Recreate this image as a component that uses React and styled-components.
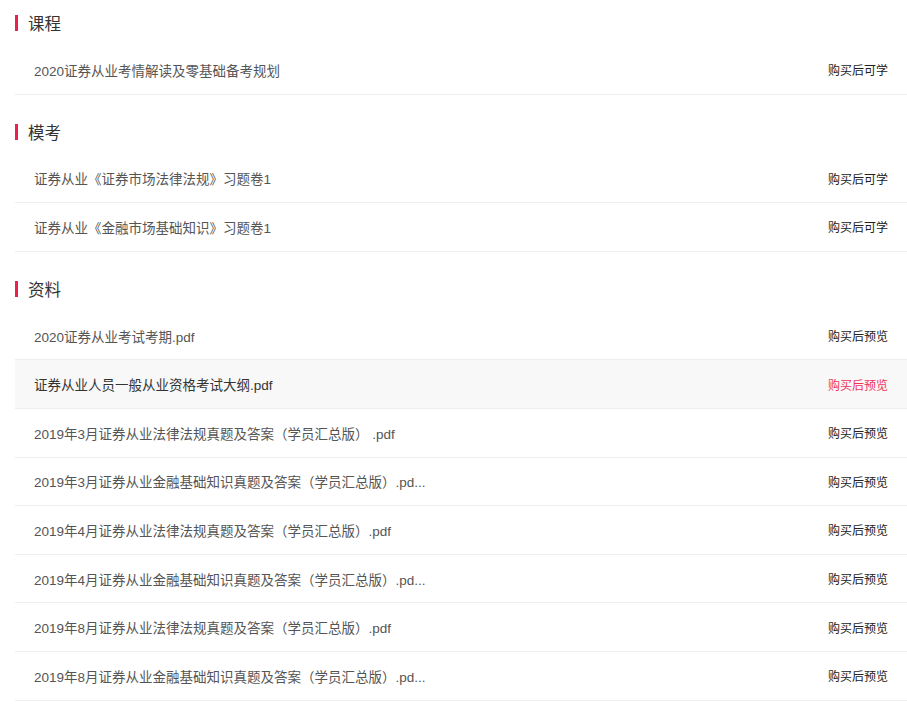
import styled, { createGlobalStyle } from 'styled-components';

const GlobalStyle = createGlobalStyle`
  html, body {
    margin: 0;
    padding: 0;
    background: #ffffff;
  }
  body {
    font-family: "Liberation Sans", "Noto Sans CJK SC", sans-serif;
    color: #333;
  }
`;

const sections = [
  {
    title: '课程',
    action: '购买后可学',
    items: ['2020证券从业考情解读及零基础备考规划'],
  },
  {
    title: '模考',
    action: '购买后可学',
    items: ['证券从业《证券市场法律法规》习题卷1', '证券从业《金融市场基础知识》习题卷1'],
  },
  {
    title: '资料',
    action: '购买后预览',
    items: [
      '2020证券从业考试考期.pdf',
      '证券从业人员一般从业资格考试大纲.pdf',
      '2019年3月证券从业法律法规真题及答案（学员汇总版） .pdf',
      '2019年3月证券从业金融基础知识真题及答案（学员汇总版）.pd...',
      '2019年4月证券从业法律法规真题及答案（学员汇总版）.pdf',
      '2019年4月证券从业金融基础知识真题及答案（学员汇总版）.pd...',
      '2019年8月证券从业法律法规真题及答案（学员汇总版）.pdf',
      '2019年8月证券从业金融基础知识真题及答案（学员汇总版）.pd...',
    ],
  },
];

const App = () => (
  <>
    <GlobalStyle />
    <Page>
      {sections.map((section, i) => (
        <Section key={section.title} $first={i === 0}>
          <Title>{section.title}</Title>
          <List>
            {section.items.map((item) => {
              const active = item.startsWith('证券从业人员');
              return (
                <Row key={item} $active={active}>
                  <Name $active={active}>{item}</Name>
                  <Action $active={active}>{section.action}</Action>
                </Row>
              );
            })}
          </List>
        </Section>
      ))}
    </Page>
  </>
);

export default App;

// Styled Components
const Page = styled.div`
  padding-left: 15px;
  width: 892px;
`;

const Section = styled.section`
  margin-top: ${({ $first }) => ($first ? '0' : '14px')};
`;

const Title = styled.h3`
  margin: 0;
  height: 46px;
  display: flex;
  align-items: center;
  font-size: 16.5px;
  font-weight: normal;
  color: #333;
  &::before {
    content: '';
    width: 3px;
    height: 16px;
    margin-right: 10px;
    background: #ee1f4d;
  }
`;

const List = styled.ul`
  margin: 0;
  padding: 0;
  list-style: none;
`;

const Row = styled.li`
  display: flex;
  align-items: center;
  justify-content: space-between;
  height: 47.6px;
  padding: 0 19px;
  border-bottom: 1px solid #eeeeee;
  background: ${({ $active }) => ($active ? '#f8f8f8' : 'transparent')};
`;

const Name = styled.span`
  font-size: 13.5px;
  white-space: nowrap;
  color: ${({ $active }) => ($active ? '#333' : '#555')};
`;

const Action = styled.span`
  font-size: 12px;
  color: ${({ $active }) => ($active ? '#f0325a' : '#222')};
`;
